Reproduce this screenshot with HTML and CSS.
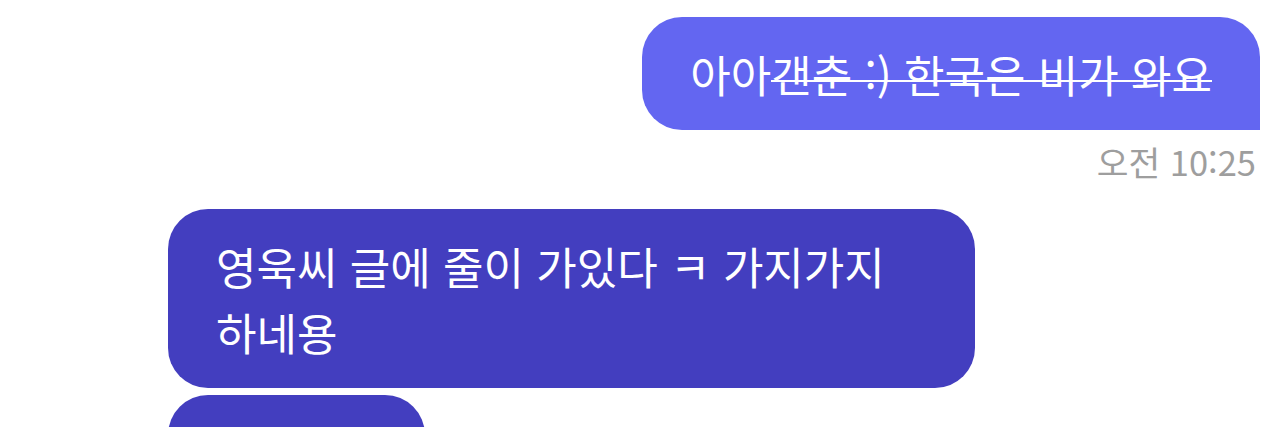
FILE: index.html
```html
<!DOCTYPE html>
<html lang="ko">

<head>
    <meta charset="UTF-8">
    <meta name="viewport" content="width=device-width, initial-scale=1.0">
    <title>Chat</title>
    <link rel="stylesheet" href="styles.css">
</head>

<body>
    <div class="chat">
        <div class="msg msg-mine">
            <div class="bubble bubble-mine">아아<s>갠춘 :) 한국은 비가 와요</s></div>
            <span class="time">오전 10:25</span>
        </div>

        <div class="msg msg-other">
            <div class="bubble bubble-other">영욱씨 글에 줄이 가있다 ㅋ 가지가지 하네용</div>
            <div class="bubble bubble-other">ㅋㅋㅋ :)</div>
        </div>
    </div>
</body>

</html>
```

FILE: styles.css
```css
/* Reset and base */
* {
    margin: 0;
    padding: 0;
    box-sizing: border-box;
}

body {
    font-family: "Noto Sans CJK KR", "Noto Sans", sans-serif;
    background: #ffffff;
    overflow: hidden;
}

.chat {
    display: flex;
    flex-direction: column;
    padding: 17px 24px 0 168px;
}

/* Message groups */
.msg {
    display: flex;
    flex-direction: column;
    gap: 7px;
}

.msg-mine {
    align-items: flex-end;
    margin-bottom: 24px;
}

.msg-other {
    align-items: flex-start;
}

/* Bubbles */
.bubble {
    max-width: 807px;
    padding: 24px 48px 23px;
    font-size: 44px;
    line-height: 66px;
    color: #ffffff;
    border-radius: 40px;
    word-break: keep-all;
}

.bubble-mine {
    background: #6366f1;
    border-bottom-right-radius: 0;
}

.bubble-other {
    background: #433ebf;
}

/* strike sits a bit under the middle, like the app draws it */
.bubble s {
    text-decoration: none;
    background: linear-gradient(currentColor, currentColor) 0 38px / 100% 2px no-repeat;
}

.time {
    font-size: 34.5px;
    line-height: 48px;
    color: #9e9e9e;
    padding-right: 4px;
}
```
